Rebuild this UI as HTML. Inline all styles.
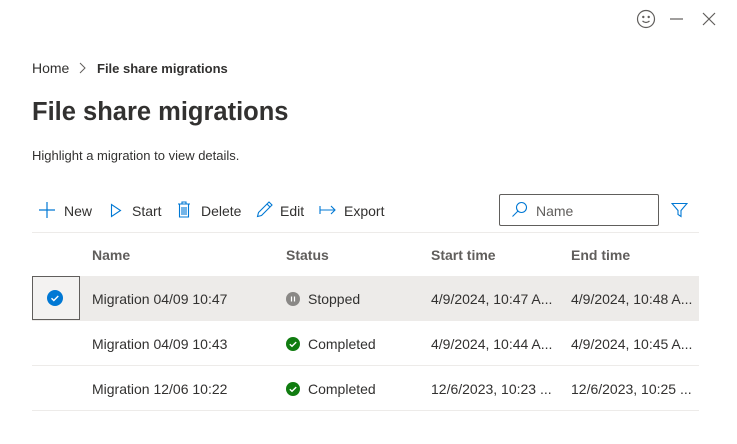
<!DOCTYPE html>
<html><head><style>
body{margin:0;width:737px;height:444px;background:#fff;font-family:"Liberation Sans",sans-serif;color:#323130;position:relative;overflow:hidden}
.a{position:absolute;white-space:nowrap}
svg{position:absolute}
.row{position:absolute;left:32px;width:667px;height:44px;border-bottom:1px solid #edebe9;font-size:14px}
.row span{position:absolute;top:15px}
</style></head><body>
<svg style="left:636px;top:9px" width="20" height="20" viewBox="0 0 20 20" fill="none" stroke="#605e5c" stroke-width="1.2"><circle cx="10" cy="10" r="8.5"/><circle cx="7.3" cy="8" r=".6" fill="#605e5c"/><circle cx="12.7" cy="8" r=".6" fill="#605e5c"/><path d="M6.5 12q3.5 3 7 0"/></svg>
<svg style="left:670px;top:18px" width="14" height="2"><path d="M0 1h13" stroke="#605e5c" stroke-width="1.2"/></svg>
<svg style="left:702px;top:12px" width="14" height="14"><path d="M1 1l12 12M13 1L1 13" stroke="#605e5c" stroke-width="1.2"/></svg>
<div class="a" style="left:32px;top:60px;font-size:14px">Home</div>
<svg style="left:79px;top:62px" width="8" height="12"><path d="M1 1l5 5-5 5" stroke="#605e5c" fill="none"/></svg>
<div class="a" style="left:97px;top:61px;font-size:13px;font-weight:bold">File share migrations</div>
<div class="a" style="left:32px;top:98px;font-size:25.5px;font-weight:bold;color:#323130">File share migrations</div>
<div class="a" style="left:32px;top:148px;font-size:13px">Highlight a migration to view details.</div>
<svg style="left:39px;top:202px" width="16" height="16"><path d="M8 0v16M0 8h16" stroke="#0078d4" stroke-width="1.2"/></svg>
<div class="a" style="left:64px;top:203px;font-size:14px">New</div>
<svg style="left:110px;top:203px" width="12" height="15"><path d="M1.5 1.5v12l9-6z" stroke="#0078d4" fill="none" stroke-width="1.1"/></svg>
<div class="a" style="left:132px;top:203px;font-size:14px">Start</div>
<svg style="left:177px;top:201px" width="14" height="17" fill="none" stroke="#0078d4" stroke-width="1.1"><path d="M1 3h12M5 3V1h4v2M2.5 3v13h9V3M5 6v8M7 6v8M9 6v8"/></svg>
<div class="a" style="left:201px;top:203px;font-size:14px">Delete</div>
<svg style="left:256px;top:201px" width="17" height="17" fill="none" stroke="#0078d4" stroke-width="1.1"><path d="M1.5 15.5l1-4L13 1l3 3L5.5 14.5z M11 3l3 3"/></svg>
<div class="a" style="left:280px;top:203px;font-size:14px">Edit</div>
<svg style="left:319px;top:204px" width="18" height="12" fill="none" stroke="#0078d4" stroke-width="1.1"><path d="M1 2v8M1 6h15M12 2l4 4-4 4"/></svg>
<div class="a" style="left:344px;top:203px;font-size:14px">Export</div>
<div class="a" style="left:499px;top:194px;width:158px;height:30px;border:1px solid #605e5c;border-radius:2px"></div>
<svg style="left:511px;top:201px" width="17" height="17" fill="none" stroke="#0078d4" stroke-width="1.1"><circle cx="10.5" cy="6.5" r="5"/><path d="M7 10L1.5 15.5"/></svg>
<div class="a" style="left:536px;top:203px;font-size:14px;color:#605e5c">Name</div>
<svg style="left:671px;top:202px" width="17" height="16" fill="none" stroke="#0078d4" stroke-width="1.1"><path d="M1 1.5h15l-6 7v6l-3-2v-4z"/></svg>
<div class="a" style="left:32px;top:232px;width:667px;height:1px;background:#edebe9"></div>
<div class="a" style="left:92px;top:247px;font-size:14px;font-weight:bold;color:#605e5c">Name</div>
<div class="a" style="left:286px;top:247px;font-size:14px;font-weight:bold;color:#605e5c">Status</div>
<div class="a" style="left:431px;top:247px;font-size:14px;font-weight:bold;color:#605e5c">Start time</div>
<div class="a" style="left:571px;top:247px;font-size:14px;font-weight:bold;color:#605e5c">End time</div>
<div class="row" style="top:276px;background:#edebe9">
<div class="a" style="left:0;top:0;width:48px;height:44px;border:1px solid #605e5c;box-sizing:border-box;background:#f3f2f1"></div>
<svg style="left:15px;top:14px" width="16" height="16"><circle cx="8" cy="8" r="8" fill="#0078d4"/><path d="M4.5 8.3l2.3 2.2 4.5-4.5" stroke="#fff" stroke-width="1.4" fill="none"/></svg>
<span style="left:60px">Migration 04/09 10:47</span>
<svg style="left:254px;top:16px" width="14" height="14"><circle cx="7" cy="7" r="7" fill="#8a8886"/><path d="M5.5 4.5v5M8.5 4.5v5" stroke="#fff" stroke-width="1.2"/></svg>
<span style="left:276px">Stopped</span><span style="left:399px">4/9/2024, 10:47 A...</span><span style="left:539px">4/9/2024, 10:48 A...</span></div>
<div class="row" style="top:321px"><span style="left:60px">Migration 04/09 10:43</span>
<svg style="left:254px;top:16px" width="14" height="14"><circle cx="7" cy="7" r="7" fill="#107c10"/><path d="M3.8 7.2l2.2 2.1 4.2-4.2" stroke="#fff" stroke-width="1.4" fill="none"/></svg>
<span style="left:276px">Completed</span><span style="left:399px">4/9/2024, 10:44 A...</span><span style="left:539px">4/9/2024, 10:45 A...</span></div>
<div class="row" style="top:366px"><span style="left:60px">Migration 12/06 10:22</span>
<svg style="left:254px;top:16px" width="14" height="14"><circle cx="7" cy="7" r="7" fill="#107c10"/><path d="M3.8 7.2l2.2 2.1 4.2-4.2" stroke="#fff" stroke-width="1.4" fill="none"/></svg>
<span style="left:276px">Completed</span><span style="left:399px">12/6/2023, 10:23 ...</span><span style="left:539px">12/6/2023, 10:25 ...</span></div>
</body></html>
